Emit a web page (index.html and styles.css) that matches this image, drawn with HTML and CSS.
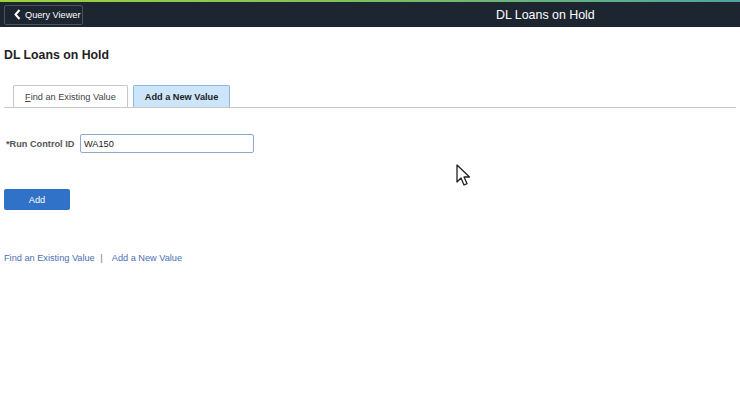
FILE: index.html
```html
<!DOCTYPE html>
<html lang="en">
<head>
    <meta charset="UTF-8">
    <title>DL Loans on Hold</title>
    <link rel="stylesheet" href="styles.css">
</head>
<body>
    <div class="banner">
        <div class="banner-bar">
            <button class="back-btn">
                <svg width="7" height="11" viewBox="0 0 7 11"><path d="M5.5 1 L1.5 5.5 L5.5 10" fill="none" stroke="#fff" stroke-width="2"/></svg>
                <span>Query Viewer</span>
            </button>
            <div class="banner-title">DL Loans on Hold</div>
        </div>
    </div>

    <div class="page">
        <h1>DL Loans on Hold</h1>

        <div class="tabs">
            <div class="tab"><u>F</u>ind an Existing Value</div>
            <div class="tab active">Add a New Value</div>
        </div>

        <div class="field">
            <label>*Run Control ID</label>
            <input type="text" value="WA150">
        </div>

        <button class="add-btn">Add</button>

        <div class="links">
            <a href="#">Find an Existing Value</a>
            <span class="sep">|</span>
            <a href="#">Add a New Value</a>
        </div>
    </div>

    <svg class="cursor" width="16" height="24" viewBox="0 0 16 24"><path d="M1 1 L1 18 L5 14 L8 21 L11 19.6 L8 13 L13.5 13 Z" fill="#fff" stroke="#222" stroke-width="1.3" stroke-linejoin="round"/></svg>
</body>
</html>
```

FILE: styles.css
```css
/* General */
body {
    margin: 0;
    font-family: 'Liberation Sans', Arial, sans-serif;
    background: #fff;
    color: #333;
}

/* Banner */
.banner {
    background: linear-gradient(90deg, #9bd23c, #7fc25a 45%, #4fa3a0);
    padding-top: 2px;
}
.banner-bar {
    background: #1c2530;
    height: 25px;
    position: relative;
    display: flex;
    align-items: center;
    padding-left: 4px;
}
.back-btn {
    display: flex;
    align-items: center;
    gap: 4px;
    height: 20px;
    width: 79px;
    padding: 0 0 0 9px;
    background: #1c2530;
    border: 1px solid #4a525c;
    border-radius: 2px;
    color: #fff;
    font-family: inherit;
    font-size: 9.2px;
    white-space: nowrap;
}
.banner-title {
    position: absolute;
    left: 496px;
    top: 6px;
    color: #fff;
    font-size: 12.4px;
}

/* Page */
.page {
    padding: 0 4px;
}
h1 {
    font-size: 12.3px;
    font-weight: bold;
    color: #222;
    margin: 21px 0 0;
    height: 15px;
}

/* Tabs */
.tabs {
    display: flex;
    gap: 5px;
    margin-top: 22px;
    padding-left: 9px;
    border-bottom: 1px solid #c8c8c8;
}
.tab {
    height: 21px;
    line-height: 22px;
    padding: 0 11px;
    font-size: 9.2px;
    color: #444;
    border: 1px solid #c8c8c8;
    border-bottom: none;
    border-radius: 2px 2px 0 0;
    background: #fff;
    white-space: nowrap;
}
.tab u {
    text-decoration: underline;
}
.tab.active {
    background: #cde5fb;
    border-color: #8fb8e0;
    color: #222;
    font-weight: bold;
}

/* Form */
.field {
    display: flex;
    align-items: center;
    margin-top: 26px;
    padding-left: 2px;
}
.field label {
    font-size: 9.2px;
    font-weight: bold;
    color: #555;
    width: 74px;
    white-space: nowrap;
}
.field input {
    width: 166px;
    height: 15px;
    padding: 1px 3px;
    font-family: inherit;
    font-size: 9.2px;
    color: #222;
    border: 1px solid #8fa8d0;
    border-radius: 2px;
    outline: none;
}
.add-btn {
    display: block;
    margin-top: 36px;
    width: 66px;
    height: 21px;
    background: #2f72c8;
    color: #fff;
    border: none;
    border-radius: 2px;
    font-family: inherit;
    font-size: 9.2px;
}

/* Links */
.links {
    margin-top: 43px;
    font-size: 9.2px;
}
.links a {
    color: #4a6fb5;
    text-decoration: none;
}
.links .sep {
    color: #777;
    margin: 0 7px 0 3px;
}

/* Pointer shown in screenshot */
.cursor {
    position: absolute;
    left: 456px;
    top: 164px;
}
```
